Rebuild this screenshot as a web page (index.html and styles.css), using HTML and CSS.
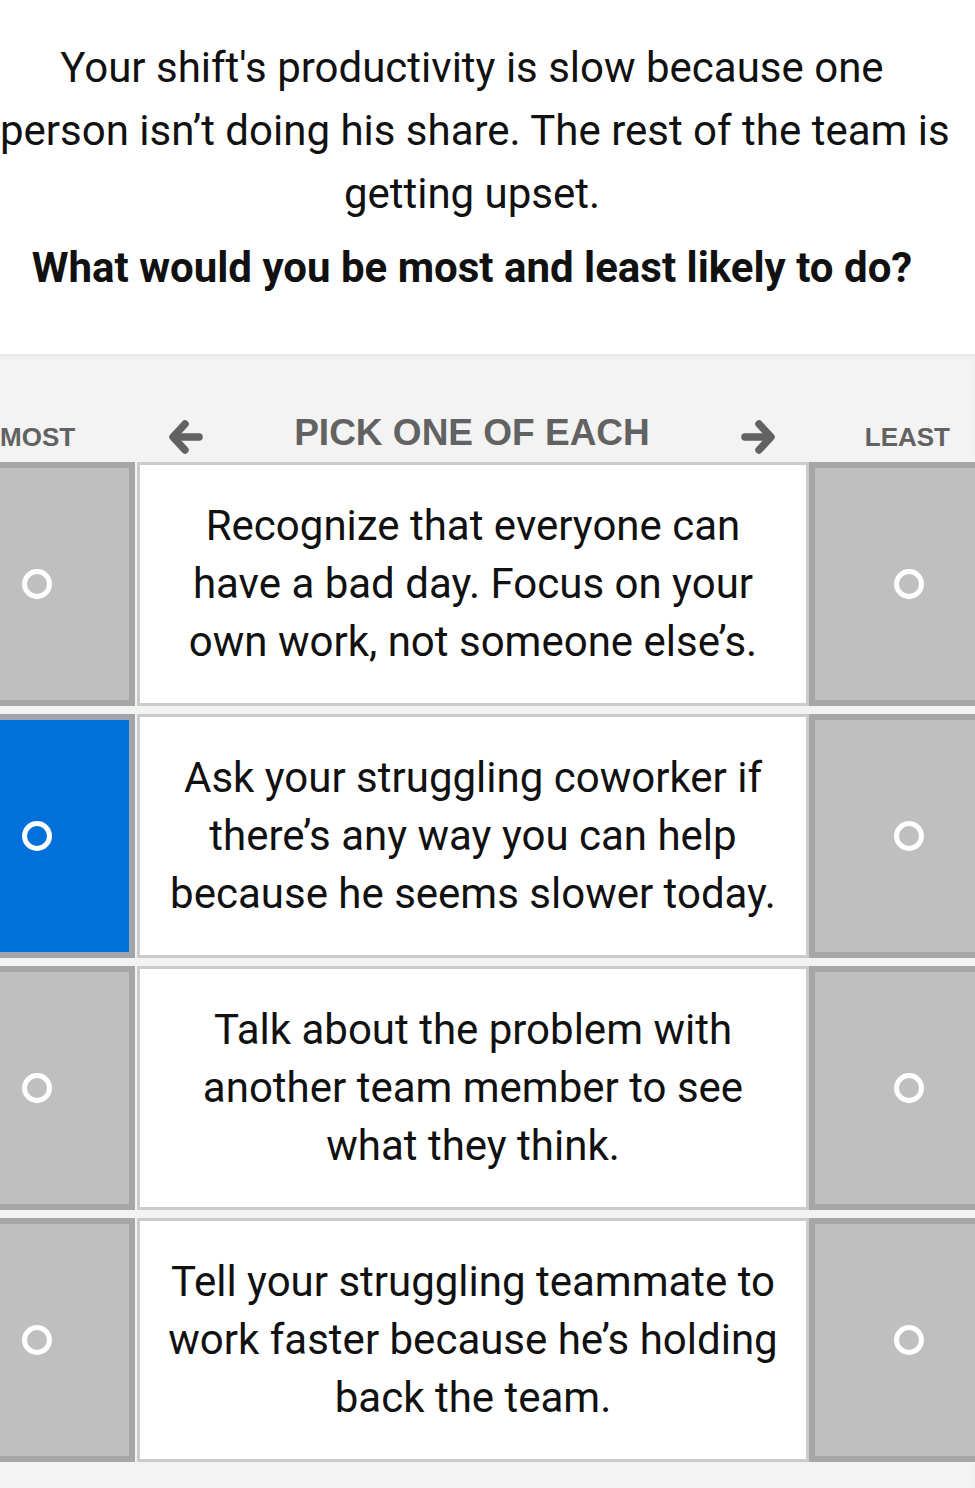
FILE: index.html
```html
<!DOCTYPE html>
<html lang="en">
<head>
<meta charset="utf-8">
<title>Pick one of each</title>
<link rel="stylesheet" href="styles.css">
</head>
<body>
<section class="question">
  <p class="scenario">Your shift's productivity is slow because one<br>person isn’t doing his share. The rest of the team is<br>getting upset.</p>
  <h2 class="prompt">What would you be most and least likely to do?</h2>
</section>
<section class="picker">
  <div class="picker-head">
    <div class="head-most">MOST</div>
    <div class="head-mid">
      <svg class="arrow" viewBox="0 0 36 36" width="36" height="36" aria-hidden="true"><polyline points="17,5 5,18 17,31" /><line x1="6" y1="18" x2="31" y2="18" /></svg>
      <span class="head-title">PICK ONE OF EACH</span>
      <svg class="arrow" viewBox="0 0 36 36" width="36" height="36" aria-hidden="true"><polyline points="19,5 31,18 19,31" /><line x1="30" y1="18" x2="5" y2="18" /></svg>
    </div>
    <div class="head-least">LEAST</div>
  </div>
  <div class="rows">
    <div class="row">
      <label class="cell cell-most"><span class="radio"></span></label>
      <div class="option">Recognize that everyone can have a bad day. Focus on your own work, not someone else’s.</div>
      <label class="cell cell-least"><span class="radio"></span></label>
    </div>
    <div class="row">
      <label class="cell cell-most is-selected"><span class="radio"></span></label>
      <div class="option">Ask your struggling coworker if there’s any way you can help because he seems slower today.</div>
      <label class="cell cell-least"><span class="radio"></span></label>
    </div>
    <div class="row">
      <label class="cell cell-most"><span class="radio"></span></label>
      <div class="option">Talk about the problem with another team member to see what they think.</div>
      <label class="cell cell-least"><span class="radio"></span></label>
    </div>
    <div class="row">
      <label class="cell cell-most"><span class="radio"></span></label>
      <div class="option">Tell your struggling teammate to work faster because he’s holding back the team.</div>
      <label class="cell cell-least"><span class="radio"></span></label>
    </div>
  </div>
</section>
</body>
</html>
```

FILE: styles.css
```css
html, body {
  margin: 0;
  padding: 0;
}
body {
  width: 975px;
  min-height: 1488px;
  background: #f3f3f3;
  overflow-x: hidden;
  font-family: Roboto, "Liberation Sans", Arial, sans-serif;
  color: #111;
}
.question {
  background: #fff;
  padding: 36px 0 55px;
}
.scenario {
  width: 944px;
  margin: 0;
  text-align: center;
  font-size: 42px;
  line-height: 63px;
  font-weight: 400;
  white-space: nowrap;
}
.prompt {
  width: 944px;
  margin: 11px 0 0;
  text-align: center;
  font-size: 42px;
  line-height: 63px;
  font-weight: 700;
}
.picker {
  box-shadow: inset 0 5px 6px -3px rgba(0, 0, 0, 0.06);
  padding: 57px 0 26px;
}
.picker-head {
  display: grid;
  grid-template-columns: 137px 670px 1fr;
  height: 48px;
  margin-bottom: 3px;
  align-items: center;
  font-family: "Liberation Sans", Arial, sans-serif;
  font-weight: 700;
  color: #626262;
}
.head-most {
  font-size: 26px;
  padding-top: 3px;
}
.head-least {
  font-size: 26px;
  text-align: right;
  padding-right: 25px;
  padding-top: 3px;
}
.head-mid {
  display: flex;
  align-items: center;
  justify-content: space-between;
  padding: 0 31px;
}
.head-title {
  font-size: 37px;
  line-height: 44px;
  margin-bottom: 6px;
}
.arrow {
  display: block;
  margin-top: 2px;
  fill: none;
  stroke: #626262;
  stroke-width: 7.5;
  stroke-linecap: round;
  stroke-linejoin: round;
}
.rows {
  display: flex;
  flex-direction: column;
  gap: 8px;
}
.row {
  display: grid;
  grid-template-columns: 135px 674px 1fr;
  height: 244px;
}
.cell {
  display: flex;
  align-items: center;
  background: #bfbfbf;
  border: 6px solid #a6a6a6;
}
.cell-most {
  border-left: 0;
  padding-left: 22px;
}
.cell-least {
  border-right: 0;
  padding-left: 79px;
}
.cell.is-selected {
  background: #0070da;
  border-color: #a1a5ab;
}
.radio {
  display: block;
  width: 30px;
  height: 30px;
  box-sizing: border-box;
  border: 5px solid #fff;
  border-radius: 50%;
}
.option {
  margin-left: 2px;
  display: flex;
  align-items: center;
  justify-content: center;
  text-align: center;
  background: #fff;
  border: 3px solid #cbcbcb;
  padding: 0 24px;
  font-size: 42px;
  line-height: 58px;
  color: #111;
}
```
